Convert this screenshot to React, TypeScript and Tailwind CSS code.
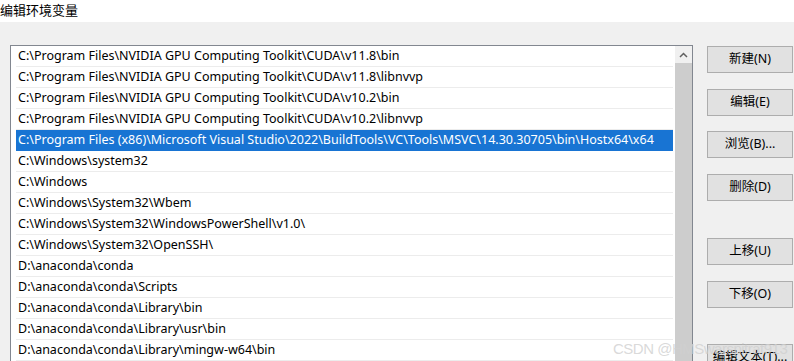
import React from 'react';

const paths = [
  'C:\\Program Files\\NVIDIA GPU Computing Toolkit\\CUDA\\v11.8\\bin',
  'C:\\Program Files\\NVIDIA GPU Computing Toolkit\\CUDA\\v11.8\\libnvvp',
  'C:\\Program Files\\NVIDIA GPU Computing Toolkit\\CUDA\\v10.2\\bin',
  'C:\\Program Files\\NVIDIA GPU Computing Toolkit\\CUDA\\v10.2\\libnvvp',
  'C:\\Program Files (x86)\\Microsoft Visual Studio\\2022\\BuildTools\\VC\\Tools\\MSVC\\14.30.30705\\bin\\Hostx64\\x64',
  'C:\\Windows\\system32',
  'C:\\Windows',
  'C:\\Windows\\System32\\Wbem',
  'C:\\Windows\\System32\\WindowsPowerShell\\v1.0\\',
  'C:\\Windows\\System32\\OpenSSH\\',
  'D:\\anaconda\\conda',
  'D:\\anaconda\\conda\\Scripts',
  'D:\\anaconda\\conda\\Library\\bin',
  'D:\\anaconda\\conda\\Library\\usr\\bin',
  'D:\\anaconda\\conda\\Library\\mingw-w64\\bin',
];

const buttons = [
  { label: '新建(N)', mt: 'mt-0' },
  { label: '编辑(E)', mt: 'mt-[16px]' },
  { label: '浏览(B)...', mt: 'mt-[15px]' },
  { label: '删除(D)', mt: 'mt-[16px]' },
  { label: '上移(U)', mt: 'mt-[37px]' },
  { label: '下移(O)', mt: 'mt-[16px]' },
  { label: '编辑文本(T)...', mt: 'mt-[36px]' },
];

const selected = 4;

export default function App() {
  return (
    <div className="relative w-[794px] h-[361px] overflow-hidden bg-[#f0f0f0] text-black font-['Noto_Sans','Noto_Sans_CJK_SC',sans-serif] text-[12.5px]">
      <div className="h-[22px] bg-white leading-[20px] text-[13px]">
        编辑环境变量
      </div>

      <div className="flex pl-[10px] pt-[23px]">
        {/* path list */}
        <div className="flex w-[683px] h-[320px] border border-[#828790] bg-white pl-[5px]">
          <div className="flex-1 flex flex-col overflow-hidden">
            {paths.map((p, i) => (
              <div
                key={i}
                className={
                  i === selected
                    ? 'h-[21px] shrink-0 flex items-center pl-[2px] bg-[#1874d3] text-white whitespace-nowrap'
                    : 'h-[21px] shrink-0 flex items-center pl-[2px] border-b border-[#ececec] whitespace-nowrap'
                }
              >
                {p}
              </div>
            ))}
          </div>
          <div className="w-[17px] ml-[2px] flex flex-col">
            <div className="h-[17px] bg-[#f0f0f0] flex items-center justify-center">
              <svg width="9" height="6" viewBox="0 0 9 6">
                <path d="M1 5 L4.5 1.5 L8 5" fill="none" stroke="#606060" strokeWidth="1.5" />
              </svg>
            </div>
            <div className="flex-1 bg-[#cdcdcd]" />
          </div>
        </div>

        {/* buttons */}
        <div className="flex flex-col ml-[14px] pt-[1px]">
          {buttons.map((b, i) => (
            <button
              key={i}
              className={`${b.mt} w-[86px] h-[27px] shrink-0 border border-[#adadad] bg-[#e1e1e1] text-[12.5px] text-black flex items-center justify-center whitespace-nowrap`}
            >
              {b.label}
            </button>
          ))}
        </div>
      </div>

      <div className="absolute left-[613px] top-[338px] text-[15px] text-[#d0d0d0]/80 font-['Liberation_Sans',sans-serif] tracking-[-0.5px] pointer-events-none">
        CSDN @HMSwarspitrat913
      </div>
    </div>
  );
}
